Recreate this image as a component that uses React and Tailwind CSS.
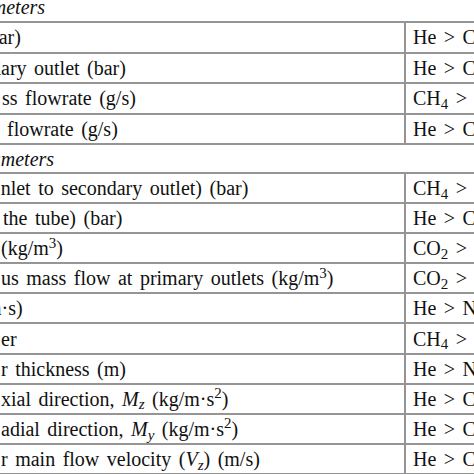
import React from 'react';

// Section A and B rows: [left text, left offset, right content]
const he = (last) => (
  <>He &gt; {last}</>
);
const ch4 = (
  <>CH<sub>4</sub> &gt; He</>
);
const co2 = (
  <>CO<sub>2</sub> &gt; CH<sub>4</sub></>
);

const rowsA = [
  { left: '(bar)', offset: 'ml-[-18px]', right: he('CO₂') },
  { left: 'dary outlet (bar)', offset: 'ml-[-9px]', right: he('CO₂') },
  { left: 'ss flowrate (g/s)', offset: 'ml-[2px]', right: ch4 },
  { left: 'flowrate (g/s)', offset: 'ml-[7px]', right: he('CO₂') },
];

const rowsB = [
  { left: 'Inlet to secondary outlet) (bar)', offset: 'ml-[-6px]', right: ch4 },
  { left: 'the tube) (bar)', offset: 'ml-[3px]', right: he('CO₂') },
  {
    left: (
      <>
        (kg/m<sup>3</sup>)
      </>
    ),
    offset: 'ml-[1px]',
    right: co2,
  },
  {
    left: (
      <>
        us mass flow at primary outlets (kg/m<sup>3</sup>)
      </>
    ),
    offset: 'ml-[1px]',
    right: co2,
  },
  { left: 'm·s)', offset: 'ml-[-14px]', right: he('N₂') },
  { left: 'er', offset: 'ml-[1px]', right: ch4 },
  { left: 'r thickness (m)', offset: 'ml-[1px]', right: he('N₂') },
  {
    left: (
      <>
        xial direction, <i>M</i>
        <sub><i>z</i></sub> (kg/m·s<sup>2</sup>)
      </>
    ),
    offset: 'ml-[1px]',
    right: he('CO₂'),
  },
  {
    left: (
      <>
        adial direction, <i>M</i>
        <sub><i>y</i></sub> (kg/m·s<sup>2</sup>)
      </>
    ),
    offset: 'ml-[1px]',
    right: he('CO₂'),
  },
  {
    left: (
      <>
        r main flow velocity (<i>V</i>
        <sub><i>z</i></sub>) (m/s)
      </>
    ),
    offset: 'ml-[1px]',
    right: he('CO₂'),
  },
];

function Row({ row, height }) {
  return (
    <div className={`flex border-b-2 border-[#959595] ${height}`}>
      <div className="w-[406px] shrink-0 flex items-center overflow-hidden border-r-2 border-[#959595]">
        <span className={`whitespace-nowrap ${row.offset}`}>{row.left}</span>
      </div>
      <div className="flex-1 flex items-center pl-[7px] overflow-hidden">
        <span className="whitespace-nowrap">{row.right}</span>
      </div>
    </div>
  );
}

export default function App() {
  return (
    <div
      className="w-[474px] h-[474px] overflow-hidden bg-white text-[20px] text-[#111111] leading-none [word-spacing:2.5px]"
      style={{ fontFamily: '"Liberation Serif", "Times New Roman", serif' }}
    >
      {/* Section A header */}
      <div className="h-[21px] flex items-end pb-[4px] overflow-hidden">
        <span className="italic whitespace-nowrap ml-[-46px]">parameters</span>
      </div>
      <div className="border-t-2 border-[#959595]">
        {rowsA.map((row, i) => (
          <Row key={i} row={row} height="h-[30.5px]" />
        ))}
      </div>

      {/* Section B header */}
      <div className="h-[27px] flex items-end pb-[3px] overflow-hidden">
        <span className="italic whitespace-nowrap ml-[-37px]">parameters</span>
      </div>
      <div className="border-t-2 border-[#959595]">
        {rowsB.map((row, i) => (
          <Row key={i} row={row} height="h-[30.1px]" />
        ))}
      </div>
    </div>
  );
}
